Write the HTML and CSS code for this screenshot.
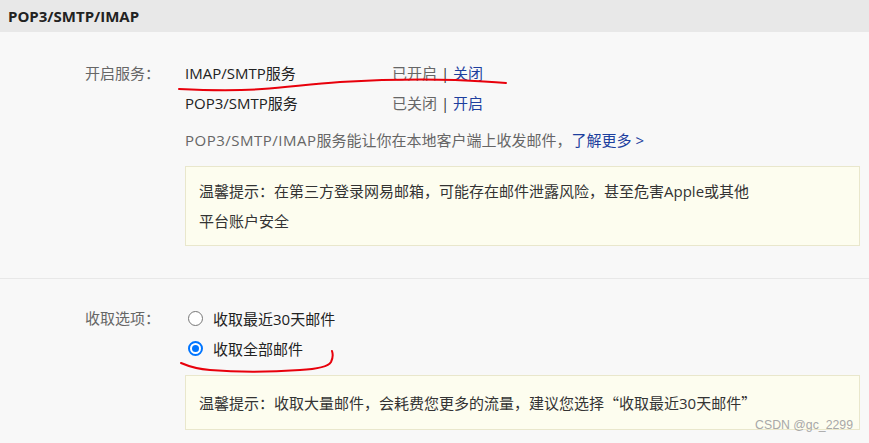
FILE: index.html
```html
<!DOCTYPE html>
<html lang="zh-CN">
<head>
<meta charset="utf-8">
<title>POP3/SMTP/IMAP</title>
<link rel="stylesheet" href="styles.css">
</head>
<body>
<div class="page">
  <div class="header">POP3/SMTP/IMAP</div>

  <section class="section first">
    <div class="label">开启服务：</div>
    <div class="content">
      <div class="svc-row">
        <span class="svc-name">IMAP/SMTP服务</span>
        <span class="status">已开启 <span class="sep">|</span> <a class="link">关闭</a></span>
      </div>
      <div class="svc-row">
        <span class="svc-name">POP3/SMTP服务</span>
        <span class="status">已关闭 <span class="sep">|</span> <a class="link">开启</a></span>
      </div>
      <div class="desc"><span class="latin-wide">POP3/SMTP/IMAP</span>服务能让你在本地客户端上收发邮件，<a class="link">了解更多 &gt;</a></div>
      <div class="notice">温馨提示：在第三方登录网易邮箱，可能存在邮件泄露风险，甚至危害Apple或其他<br>平台账户安全</div>
    </div>
  </section>

  <section class="section second">
    <div class="label">收取选项：</div>
    <div class="content">
      <label class="radio-row"><span class="radio"></span><span>收取最近30天邮件</span></label>
      <label class="radio-row"><span class="radio checked"></span><span>收取全部邮件</span></label>
      <div class="notice notice-small">温馨提示：收取大量邮件，会耗费您更多的流量，建议您选择<span class="cjk">“</span>收取最近30天邮件<span class="cjk">”</span></div>
    </div>
  </section>

  <svg class="marks" width="869" height="443" viewBox="0 0 869 443" aria-hidden="true">
    <path d="M179 89 C200 90, 235 91, 262 89 C290 87, 310 84, 340 82 C375 80, 420 79, 455 80 C480 81, 495 82, 506 83" fill="none" stroke="#e8000b" stroke-width="2" stroke-linecap="round"/>
    <path d="M181 363 C188 366, 196 369, 210 370 C235 372, 270 372, 300 370 C318 369, 328 367, 331 362 C333 358, 333 354, 332 351" fill="none" stroke="#e8000b" stroke-width="2" stroke-linecap="round"/>
  </svg>

  <div class="watermark">CSDN @gc_2299</div>
</div>
</body>
</html>
```

FILE: styles.css
```css
html, body {
  margin: 0;
  padding: 0;
}

body {
  background: #f8f8f8;
  font-family: "Open Sans", "Noto Sans CJK SC", sans-serif;
  font-size: 15px;
  color: #333;
}

.page {
  position: relative;
  width: 869px;
  height: 443px;
  overflow: hidden;
}

.header {
  height: 32px;
  line-height: 32px;
  background: #e8e8e8;
  padding-left: 8px;
  font-weight: bold;
  font-size: 15px;
  color: #222;
}

.section {
  display: flex;
  padding-left: 85px;
  padding-right: 9px;
}

.section.first {
  padding-top: 26px;
  padding-bottom: 32px;
  border-bottom: 1px solid #e8e8e8;
}

.section.second {
  padding-top: 24px;
}

.label {
  width: 100px;
  flex: none;
  line-height: 30px;
  color: #666;
}

.content {
  flex: 1;
  display: flex;
  flex-direction: column;
}

.svc-row {
  display: flex;
  height: 30px;
  line-height: 30px;
}

.svc-name {
  width: 207px;
  color: #222;
}

.status {
  color: #666;
}

.sep {
  color: #333;
}

.link {
  color: #1d3f9e;
  text-decoration: none;
}

.desc {
  margin-top: 7px;
  line-height: 30px;
  color: #666;
}

.latin-wide {
  letter-spacing: 0.5px;
}

.cjk {
  font-family: "Noto Sans CJK SC", sans-serif;
}

.notice {
  margin-top: 11px;
  background: #fdfdef;
  border: 1px solid #e9e7cc;
  padding: 9px 13px;
  line-height: 30px;
  color: #333;
}

.notice-small {
  margin-top: 12px;
  padding: 12px 13px 11px;
}

.radio-row {
  display: flex;
  align-items: center;
  height: 30px;
  color: #222;
}

.radio {
  width: 15px;
  height: 15px;
  box-sizing: border-box;
  border: 1px solid #767676;
  border-radius: 50%;
  background: #fff;
  margin-left: 3px;
  margin-right: 10px;
  position: relative;
}

.radio.checked {
  border: 2px solid #0075ff;
}

.radio.checked::after {
  content: "";
  position: absolute;
  left: 2px;
  top: 2px;
  width: 7px;
  height: 7px;
  border-radius: 50%;
  background: #0075ff;
}

.marks {
  position: absolute;
  left: 0;
  top: 0;
  pointer-events: none;
}

.watermark {
  position: absolute;
  right: 16px;
  top: 418px;
  font-family: "Liberation Sans", sans-serif;
  font-size: 12.3px;
  color: #a8a8a8;
}
```
